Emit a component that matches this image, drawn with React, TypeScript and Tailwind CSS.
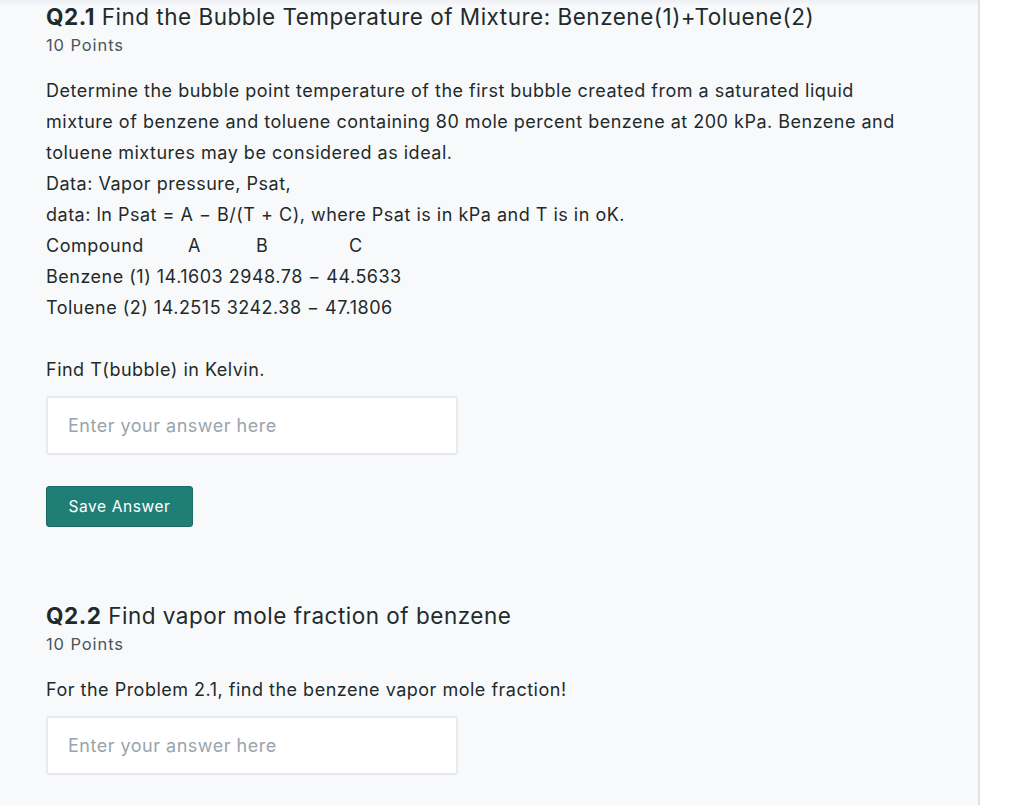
import React from "react";

const font = { fontFamily: "Inter, 'Noto Sans', sans-serif" };

function AnswerInput() {
  return (
    <input
      type="text"
      placeholder="Enter your answer here"
      className="block w-[412px] h-[59px] bg-white border-2 border-[#e6e9ee] rounded-[3px] pl-[20px] text-[18px] tracking-[0.5px] text-[#1f2d2d] placeholder:text-[#9aa3ab] outline-none"
      style={font}
    />
  );
}

export default function App() {
  return (
    <div className="flex w-[1024px] h-[805px] overflow-hidden text-[#1f2b2b]" style={font}>
      <div className="relative w-[980px] h-full bg-[#f8f9fb] border-r-2 border-[#dfe3e8] pl-[46px] pt-[3px]">
        <div className="absolute left-0 right-0 top-0 h-[6px] bg-gradient-to-b from-[#eef0f3] to-transparent" />
        <h2 className="relative text-[22.5px] leading-[28px] tracking-[0.5px] whitespace-nowrap">
          <span className="font-bold">Q2.1</span> Find the Bubble Temperature of Mixture: Benzene(1)+Toluene(2)
        </h2>
        <div className="text-[16.5px] leading-[28px] tracking-[0.9px] text-[#4a5559]">10 Points</div>
        <div className="mt-[16px] text-[18px] leading-[31px] tracking-[0.5px] whitespace-nowrap">
          <p>
            Determine the bubble point temperature of the first bubble created from a saturated liquid
            <br />
            mixture of benzene and toluene containing 80 mole percent benzene at 200 kPa. Benzene and
            <br />
            toluene mixtures may be considered as ideal.
          </p>
          <p>Data: Vapor pressure, Psat,</p>
          <p>data: ln Psat = A − B/(T + C), where Psat is in kPa and T is in oK.</p>
          <p>
            <span className="inline-block w-[142px]">Compound</span>
            <span className="inline-block w-[68px]">A</span>
            <span className="inline-block w-[93px]">B</span>
            <span>C</span>
          </p>
          <p>Benzene (1) 14.1603 2948.78 − 44.5633</p>
          <p>Toluene (2) 14.2515 3242.38 − 47.1806</p>
          <p className="mt-[31px]">Find T(bubble) in Kelvin.</p>
        </div>
        <div className="mt-[11px]">
          <AnswerInput />
        </div>
        <button className="mt-[31px] w-[147px] h-[41px] bg-[#1f7f77] border border-[#186a63] rounded-[3px] text-white text-[15.5px] tracking-[0.6px]" style={font}>
          Save Answer
        </button>
        <h2 className="mt-[75px] text-[22.5px] leading-[28px] tracking-[0.5px]">
          <span className="font-bold">Q2.2</span> Find vapor mole fraction of benzene
        </h2>
        <div className="text-[16.5px] leading-[28px] tracking-[0.9px] text-[#4a5559]">10 Points</div>
        <p className="mt-[16px] text-[18px] leading-[31px] tracking-[0.5px]">For the Problem 2.1, find the benzene vapor mole fraction!</p>
        <div className="mt-[11px]">
          <AnswerInput />
        </div>
      </div>
      <div className="flex-1 bg-white" />
    </div>
  );
}
